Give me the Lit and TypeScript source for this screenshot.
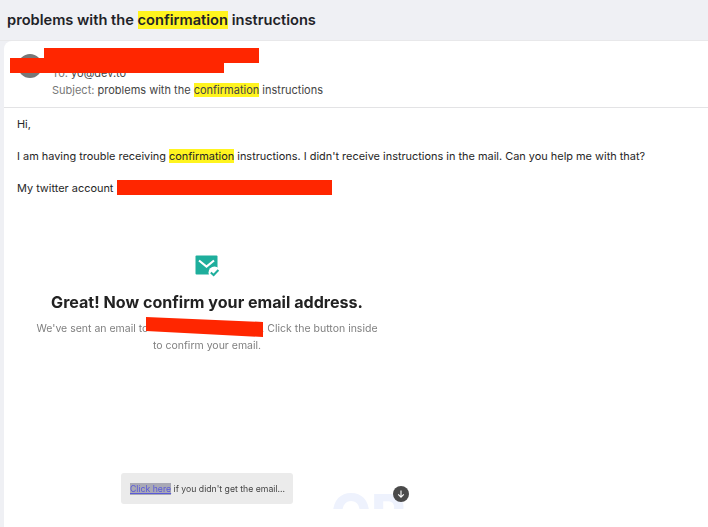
import { LitElement, html, css, svg } from "lit";
import { customElement } from "lit/decorators.js";

@customElement("app-root")
export class AppRoot extends LitElement {
  static styles = css`
    :host {
      display: flex;
      flex-direction: column;
      width: 708px;
      height: 527px;
      overflow: hidden;
      position: relative;
      background: #eff0f4;
      font-family: Inter, "Liberation Sans", sans-serif;
      color: #222;
      box-sizing: border-box;
    }
    mark { background: #fff41f; color: inherit; }
    .title {
      height: 41px;
      flex: none;
      box-sizing: border-box;
      padding: 11px 0 0 7px;
      font-size: 14.65px;
      line-height: 18px;
      font-weight: 600;
      color: #1f2328;
      white-space: nowrap;
      border-bottom: 1px solid #e8e8ea;
    }
    .card {
      flex: 1;
      margin-left: 4px;
      background: #fff;
      border-top-left-radius: 8px;
      display: flex;
      flex-direction: column;
      min-height: 0;
    }
    .head {
      flex: none;
      height: 67px;
      box-sizing: border-box;
      display: flex;
      gap: 10px;
      padding: 13px 0 0 14px;
      border-bottom: 1px solid #e3e3e5;
    }
    .avatar {
      width: 24px;
      height: 24px;
      border-radius: 50%;
      background: #777;
      flex: none;
    }
    .meta {
      padding-top: 11px;
      font-size: 11px;
      line-height: 17px;
      color: #444;
      white-space: nowrap;
    }
    .meta .k { color: #777; }
    .body {
      padding: 8px 0 0 13px;
      font-size: 10.93px;
      line-height: 16px;
      color: #262626;
      white-space: nowrap;
    }
    .body p { margin: 0 0 16px; }
    .shot {
      flex: 1;
      display: flex;
      flex-direction: column;
      align-items: center;
      width: 406px;
      margin-top: 43px;
      min-height: 0;
      filter: blur(0.45px);
    }
    .icon { display: block; margin-left: 1px; }
    .shot h2 {
      margin: 13px 0 0;
      font-size: 16.1px;
      line-height: 20px;
      font-weight: 700;
      color: #222;
      white-space: nowrap;
    }
    .sub {
      margin: 8px 0 0;
      font-size: 10.5px;
      line-height: 17px;
      color: #808080;
      text-align: center;
      white-space: nowrap;
    }
    .gap { display: inline-block; width: 113px; }
    .notice {
      margin: 119px 0 0 117px;
      width: 172px;
      height: 31px;
      box-sizing: border-box;
      align-self: flex-start;
      padding-left: 9px;
      background: #ebebeb;
      border-radius: 3px;
      display: flex;
      align-items: center;
      font-size: 8.7px;
      color: #444;
      white-space: pre;
    }
    .notice a {
      color: #5959d9;
      text-decoration: underline;
      background: #a9a9b5;
      padding: 1px 0;
    }
    .redact { position: absolute; background: #ff2600; }
    .r1 { left: 44px; top: 48px; width: 215px; height: 15px; }
    .r2 { left: 10px; top: 58px; width: 214px; height: 15px; }
    .r3 { left: 117px; top: 180px; width: 215px; height: 15px; }
    .tilt { position: absolute; left: 140px; top: 312px; }
    .down {
      position: absolute;
      left: 393px;
      top: 486px;
      width: 16px;
      height: 16px;
      border-radius: 50%;
      background: #4a4a4a;
      display: flex;
      align-items: center;
      justify-content: center;
    }
    .faint {
      position: absolute;
      left: 331px;
      top: 488px;
      width: 90px;
      height: 21px;
      overflow: hidden;
      font-size: 52px;
      line-height: 52px;
      font-weight: 800;
      color: #eef2fd;
    }
  `;

  render() {
    return html`
      <div class="title">problems with the <mark>confirmation</mark> instructions</div>
      <div class="card">
        <div class="head">
          <div class="avatar"></div>
          <div class="meta">
            <div><span class="k">To:</span> yo@dev.to</div>
            <div><span class="k">Subject:</span> problems with the <mark>confirmation</mark> instructions</div>
          </div>
        </div>
        <div class="body">
          <p>Hi,</p>
          <p>I am having trouble receiving <mark>confirmation</mark> instructions. I didn't receive instructions in the mail. Can you help me with that?</p>
          <p>My twitter account</p>
        </div>
        <div class="shot">
          <svg class="icon" width="26" height="24" viewBox="0 0 26 24">
            <rect x="0.5" y="0.5" width="22" height="19" rx="1" fill="#1eae9c"></rect>
            <path d="M4 5.5 L11.5 11.5 L19 5.5" fill="none" stroke="#fff" stroke-width="2.2"></path>
            <circle cx="19.5" cy="17.5" r="6" fill="#fff"></circle>
            <path d="M15.8 17.5 L18.6 20 L23.4 15" fill="none" stroke="#1eae9c" stroke-width="2"></path>
          </svg>
          <h2>Great! Now confirm your email address.</h2>
          <p class="sub">We've sent an email to<span class="gap"></span>. Click the button inside<br />to confirm your email.</p>
          <div class="notice"><a>Click here</a> if you didn't get the email...</div>
        </div>
      </div>
      <div class="faint">OP</div>
      <div class="down">
        <svg width="10" height="10" viewBox="0 0 10 10">
          <path d="M5 1.5 V8 M2.2 5.4 L5 8.2 L7.8 5.4" fill="none" stroke="#fff" stroke-width="1.1"></path>
        </svg>
      </div>
      <div class="redact r1"></div>
      <div class="redact r2"></div>
      <div class="redact r3"></div>
      <svg class="tilt" width="130" height="30" viewBox="140 312 130 30">
        ${svg`<polygon points="146,317 263,322 263,337 146,331" fill="#ff2600"></polygon>`}
      </svg>
    `;
  }
}
